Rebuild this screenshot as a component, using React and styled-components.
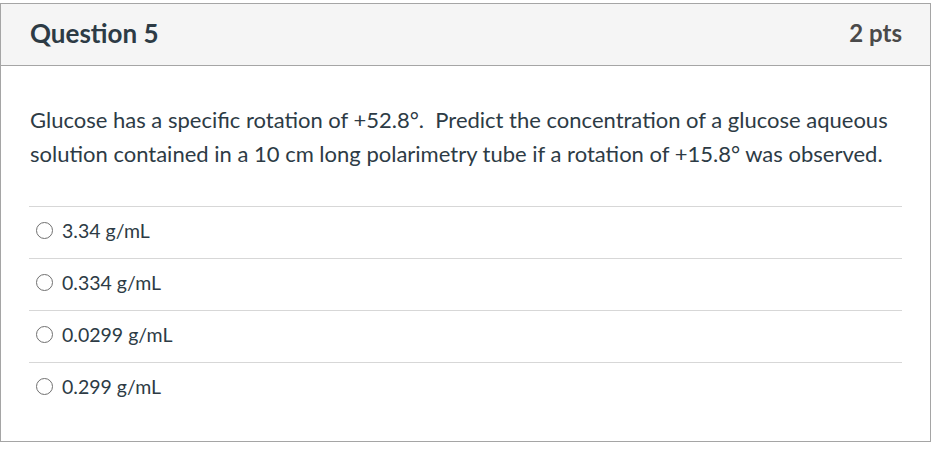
import React from "react";
import styled, { createGlobalStyle } from "styled-components";

const Global = createGlobalStyle`
  html, body { margin: 0; padding: 0; background: #fff; }
  body { font-family: Lato, "Open Sans", sans-serif; color: #2d3b45; }
`;

const Page = styled.div`
  padding: 3px 6px 0 0;
`;

const Card = styled.div`
  border: 1px solid #a5a5a5;
  box-sizing: border-box;
  width: 931px;
`;

const Header = styled.div`
  display: flex;
  justify-content: space-between;
  align-items: center;
  height: 62px;
  padding: 0 28px 4px 29px;
  box-sizing: border-box;
  background: #f5f5f5;
  border-bottom: 1px solid #a5a5a5;
`;

const Title = styled.h3`
  margin: 0;
  font-size: 26px;
  font-weight: 700;
  color: #2d3b45;
`;

const Points = styled.span`
  font-size: 24px;
  font-weight: 700;
  color: #4a4a4a;
`;

const Body = styled.div`
  padding: 37px 28px 27px 28px;
`;

const Text = styled.p`
  margin: 0 0 35px 1px;
  font-size: 22px;
  line-height: 34px;
  color: #2d3b45;
`;

const Answers = styled.div`
  display: flex;
  flex-direction: column;
`;

const Answer = styled.label`
  display: flex;
  align-items: center;
  gap: 9px;
  height: 52px;
  padding: 0 0 5px 7px;
  box-sizing: border-box;
  border-top: 1px solid #d7d7d7;
  font-size: 19.5px;
  color: #2d3b45;
`;

const Radio = styled.span`
  width: 17px;
  height: 17px;
  box-sizing: border-box;
  border: 1.5px solid #707070;
  border-radius: 50%;
  flex-shrink: 0;
`;

const answers = ["3.34 g/mL", "0.334 g/mL", "0.0299 g/mL", "0.299 g/mL"];

export default function App() {
  return (
    <>
      <Global />
      <Page>
        <Card>
          <Header>
            <Title>Question 5</Title>
            <Points>2 pts</Points>
          </Header>
          <Body>
            <Text>
              Glucose has a specific rotation of +52.8°.&nbsp; Predict the concentration of a glucose aqueous solution contained in a 10 cm long polarimetry tube if a rotation of +15.8° was observed.
            </Text>
            <Answers>
              {answers.map((a) => (
                <Answer key={a}>
                  <Radio />
                  {a}
                </Answer>
              ))}
            </Answers>
          </Body>
        </Card>
      </Page>
    </>
  );
}
